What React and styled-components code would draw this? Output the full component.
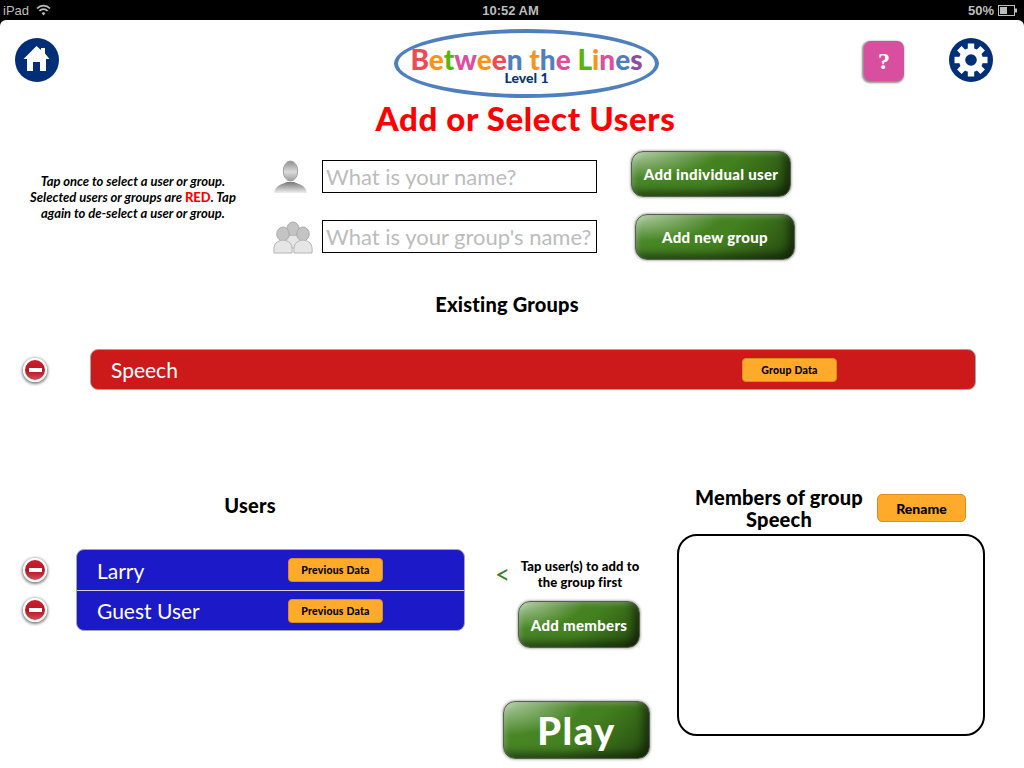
import React from 'react';
import styled, { createGlobalStyle } from 'styled-components';

const GlobalStyle = createGlobalStyle`
  html, body {
    margin: 0;
    background: #000;
    font-family: "Lato", "Liberation Sans", sans-serif;
  }
  * { box-sizing: border-box; }
`;

const Page = styled.div`
  width: 1024px;
  height: 768px;
  overflow: hidden;
  background: #000;
`;

const StatusBar = styled.div`
  height: 20px;
  padding: 0 6px 0 3px;
  display: grid;
  grid-template-columns: 1fr auto 1fr;
  align-items: center;
  color: #bdbdbd;
  font: 13px "Liberation Sans", sans-serif;
`;

const StatusLeft = styled.div`
  display: flex;
  align-items: center;
  gap: 7px;
`;

const StatusTime = styled.div`
  font-weight: 700;
`;

const StatusRight = styled.div`
  display: flex;
  justify-content: flex-end;
  align-items: center;
  gap: 4px;
  font-weight: 700;
`;

const Screen = styled.div`
  height: 748px;
  background: #fff;
  border-radius: 6px 6px 0 0;
  color: #000;
`;

const Header = styled.header`
  height: 80px;
  padding: 9px 0 0 15px;
  display: flex;
  align-items: flex-start;
`;

const RoundIcon = styled.div`
  width: 44px;
  height: 44px;
  margin: 9px 0 0 ${(p) => p.$left || 0}px;
  flex: none;
  svg { display: block; }
`;

const Logo = styled.div`
  width: 265px;
  height: 69px;
  margin-left: 335px;
  flex: none;
  border: 4px solid #4f7fbd;
  border-radius: 50%;
  display: flex;
  flex-direction: column;
  align-items: center;
  padding-top: 14px;
`;

const LogoTitle = styled.div`
  font-size: 28px;
  line-height: 24px;
  font-weight: 900;
  white-space: nowrap;
`;

const LogoLetter = styled.span`
  color: ${(p) => p.$color};
`;

const LogoLevel = styled.div`
  font-size: 14px;
  line-height: 14px;
  font-weight: 900;
  color: #0b3478;
`;

const HelpButton = styled.div`
  width: 40px;
  height: 40px;
  margin: 12px 0 0 205px;
  flex: none;
  border-radius: 7px;
  background: #d94f9f;
  box-shadow: -1px 1px 2px 1px rgba(0, 0, 0, 0.45);
  color: #fff;
  font: 700 24px/40px "Liberation Serif", serif;
  text-align: center;
`;

const Title = styled.h1`
  margin: 0;
  height: 36px;
  padding-left: 27px;
  color: #ff0000;
  font-size: 33px;
  line-height: 36px;
  font-weight: 900;
  letter-spacing: 0.6px;
  text-align: center;
`;

const FormSection = styled.section`
  padding-top: 15px;
  display: flex;
  align-items: flex-start;
`;

const Hint = styled.p`
  width: 216px;
  margin: 22px 0 0 25px;
  flex: none;
  font-size: 13px;
  line-height: 16px;
  font-weight: 700;
  font-style: italic;
  text-align: center;
`;

const RedWord = styled.span`
  color: #ff0000;
  font-style: normal;
  font-weight: 900;
`;

const Fields = styled.div`
  margin-left: 32px;
  display: flex;
  flex-direction: column;
  gap: 17px;
`;

const FieldRow = styled.div`
  display: flex;
  align-items: flex-start;
  height: 46px;
`;

const FieldIcon = styled.div`
  width: 49px;
  flex: none;
  margin-top: ${(p) => p.$top}px;
  svg { display: block; }
`;

const TextInput = styled.input`
  width: 275px;
  height: 33px;
  flex: none;
  margin-top: ${(p) => p.$top}px;
  padding: 0 3px;
  border: 1px solid #000;
  border-radius: 0;
  outline: none;
  font-family: "Lato", sans-serif;
  font-size: 22px;
  &::placeholder { color: #bcbcbc; opacity: 1; }
`;

const GreenButton = styled.button`
  width: ${(p) => p.$w}px;
  height: ${(p) => p.$h}px;
  margin: ${(p) => p.$margin || '0'};
  padding: 0;
  flex: none;
  border: 1px solid #55604f;
  border-radius: ${(p) => p.$radius || 12}px;
  background:
    radial-gradient(ellipse 55% 60% at 0% 0%, rgba(255, 255, 255, 0.55), rgba(255, 255, 255, 0) 100%),
    linear-gradient(135deg, #4b8a2a 0%, #43801f 55%, #24480f 100%);
  box-shadow:
    inset -5px -5px 9px rgba(0, 0, 0, 0.5),
    inset 2px 2px 5px rgba(255, 255, 255, 0.25),
    0 0 3px rgba(0, 0, 0, 0.55);
  color: #fff;
  font-family: "Lato", sans-serif;
  font-size: ${(p) => p.$size || 15}px;
  font-weight: 900;
  letter-spacing: ${(p) => p.$spacing || 0.3}px;
  white-space: nowrap;
`;

const SectionHeading = styled.h2`
  margin: ${(p) => p.$margin || 0};
  padding: ${(p) => p.$padding || 0};
  font-size: 20px;
  line-height: ${(p) => p.$line || 30}px;
  font-weight: 900;
  letter-spacing: 0.2px;
  text-align: center;
`;

const GroupRow = styled.div`
  margin-top: 30px;
  padding-left: 23px;
  display: flex;
  align-items: center;
`;

const MinusBadge = styled.div`
  width: 24px;
  height: 24px;
  flex: none;
  border-radius: 50%;
  border: 2px solid #fff;
  background: linear-gradient(#c8222e 0%, #bb1525 55%, #d3525c 100%);
  box-shadow: 0 1px 3px 1px rgba(0, 0, 0, 0.5);
  display: flex;
  align-items: center;
  justify-content: center;
  &::after {
    content: "";
    width: 13px;
    height: 4px;
    background: #fff;
  }
`;

const RedBar = styled.div`
  width: 886px;
  height: 41px;
  margin-left: 43px;
  padding-left: 20px;
  display: flex;
  align-items: center;
  border: 1px solid #a5a5a5;
  border-radius: 8px;
  background: #cc1a1a;
`;

const RowName = styled.div`
  width: ${(p) => p.$w}px;
  flex: none;
  color: #fff;
  font-size: 21px;
`;

const DataButton = styled.button`
  width: 95px;
  height: 24px;
  padding: 0;
  flex: none;
  border: 1px solid #d38f22;
  border-radius: 4px;
  background: #ffaa2b;
  color: #000;
  font-family: "Lato", sans-serif;
  font-size: 10.5px;
  font-weight: 900;
  letter-spacing: 0.2px;
`;

const BottomSection = styled.section`
  margin-top: 96px;
  display: flex;
  align-items: flex-start;
`;

const UsersColumn = styled.div`
  width: 480px;
  flex: none;
`;

const UsersBody = styled.div`
  margin-top: 29px;
  padding-left: 23px;
  display: flex;
  align-items: flex-start;
`;

const MinusColumn = styled.div`
  margin-top: 9px;
  display: flex;
  flex-direction: column;
  gap: 16px;
`;

const UserList = styled.div`
  width: 389px;
  margin-left: 29px;
  border: 1px solid #a5a5a5;
  border-radius: 8px;
  background: #1c19c8;
  overflow: hidden;
`;

const UserRow = styled.div`
  height: 40px;
  padding-left: 20px;
  display: flex;
  align-items: center;
  & + & { border-top: 1px solid #cfcfdc; }
`;

const MiddleColumn = styled.div`
  width: 180px;
  flex: none;
`;

const TipRow = styled.div`
  margin-top: 72px;
  display: flex;
  align-items: center;
`;

const TipArrow = styled.div`
  width: 38px;
  padding-left: 15px;
  flex: none;
  color: #3f7f2a;
  font-size: 26px;
  line-height: 32px;
`;

const TipText = styled.div`
  width: 124px;
  flex: none;
  font-size: 13px;
  line-height: 16px;
  font-weight: 900;
  text-align: center;
  letter-spacing: 0.1px;
`;

const MembersColumn = styled.div`
  flex: none;
  width: 344px;
`;

const MembersHeader = styled.div`
  display: flex;
  align-items: flex-start;
  padding-left: 34px;
`;

const MembersTitle = styled.div`
  width: 170px;
  flex: none;
`;

const RenameButton = styled.button`
  width: 89px;
  height: 28px;
  margin: 8px 0 0 13px;
  padding: 0;
  flex: none;
  border: 1px solid #d38f22;
  border-radius: 5px;
  background: #ffaa2b;
  color: #000;
  font-family: "Lato", sans-serif;
  font-size: 14px;
  font-weight: 900;
`;

const MembersBox = styled.div`
  width: 308px;
  height: 202px;
  margin: 4px 0 0 17px;
  border: 2px solid #000;
  border-radius: 20px;
`;

const LOGO_LETTERS = [
  ['B', '#ef4a52'], ['e', '#f7941e'], ['t', '#5ab40a'], ['w', '#de4e9c'], ['e', '#f7941e'], ['e', '#ef4a52'], ['n', '#4f7fbd'],
  [' ', '#000'],
  ['t', '#f7941e'], ['h', '#4f7fbd'], ['e', '#de4e9c'],
  [' ', '#000'],
  ['L', '#5ab40a'], ['i', '#f7941e'], ['n', '#de4e9c'], ['e', '#4f7fbd'], ['s', '#8a4fa3'],
];

const USERS = ['Larry', 'Guest User'];

function WifiIcon() {
  return (
    <svg width="15" height="12" viewBox="0 0 15 12" fill="none" stroke="#bdbdbd" strokeWidth="1.7">
      <path d="M1 4.5 A9 9 0 0 1 14 4.5" />
      <path d="M3.4 7 A5.6 5.6 0 0 1 11.6 7" />
      <path d="M7.5 11.5 L5.6 9.3 A2.6 2.6 0 0 1 9.4 9.3 Z" fill="#bdbdbd" stroke="none" />
    </svg>
  );
}

function BatteryIcon() {
  return (
    <svg width="20" height="11" viewBox="0 0 20 11">
      <rect x="0.5" y="0.5" width="16" height="10" fill="none" stroke="#bdbdbd" />
      <rect x="2" y="2" width="7" height="7" fill="#bdbdbd" />
      <rect x="17" y="3.5" width="2" height="4" fill="#bdbdbd" />
    </svg>
  );
}

function HomeIcon() {
  return (
    <svg width="44" height="44" viewBox="0 0 44 44">
      <circle cx="22" cy="22" r="22" fill="#002f78" />
      <path
        d="M21.5 8 L26 12 V10 H30 V15.5 L34.5 21 H31 V33 H25 V24 H18 V33 H12 V21 H8.5 Z"
        fill="#fff"
      />
    </svg>
  );
}

function GearIcon() {
  return (
    <svg width="44" height="44" viewBox="0 0 44 44">
      <circle cx="22" cy="22" r="22" fill="#002f78" />
      {[0, 45, 90, 135, 180, 225, 270, 315].map((a) => (
        <rect key={a} x="18.8" y="5.5" width="6.4" height="8" fill="#fff" transform={`rotate(${a} 22 22)`} />
      ))}
      <circle cx="22" cy="22" r="12" fill="#fff" />
      <circle cx="22" cy="22" r="5.8" fill="#002f78" />
    </svg>
  );
}

function PersonIcon() {
  return (
    <svg width="35" height="34" viewBox="0 0 35 34">
      <defs>
        <linearGradient id="personFill" x1="0" y1="0" x2="0" y2="1">
          <stop offset="0" stopColor="#8f8f8f" />
          <stop offset="0.55" stopColor="#dcdcdc" />
          <stop offset="1" stopColor="#9a9a9a" />
        </linearGradient>
        <linearGradient id="personBody" x1="0" y1="0" x2="0" y2="1">
          <stop offset="0" stopColor="#777" />
          <stop offset="1" stopColor="#efefef" />
        </linearGradient>
      </defs>
      <ellipse cx="17.5" cy="11" rx="7.2" ry="10" fill="url(#personFill)" stroke="#a0a0a0" />
      <path d="M1 33 C2 25 10 24 14 22 H21 C25 24 33 25 34 33 Z" fill="url(#personBody)" />
    </svg>
  );
}

function GroupIcon() {
  const figure = (cx, cy) => (
    <g key={cx}>
      <ellipse cx={cx} cy={cy} rx="6.2" ry="7" fill="#c4c4c4" stroke="#aaa" />
      <path
        d={`M${cx - 9} ${cy + 19} C${cx - 10} ${cy + 9} ${cx - 6} ${cy + 7} ${cx} ${cy + 6} C${cx + 6} ${cy + 7} ${cx + 10} ${cy + 9} ${cx + 9} ${cy + 19} Z`}
        fill="#e6e6e6"
        stroke="#b5b5b5"
      />
    </g>
  );
  return (
    <svg width="40" height="34" viewBox="0 0 40 34">
      {figure(20, 8)}
      {figure(10, 13)}
      {figure(30, 13)}
    </svg>
  );
}

export default function App() {
  return (
    <Page>
      <GlobalStyle />
      <StatusBar>
        <StatusLeft>iPad <WifiIcon /></StatusLeft>
        <StatusTime>10:52 AM</StatusTime>
        <StatusRight>50% <BatteryIcon /></StatusRight>
      </StatusBar>
      <Screen>
        <Header>
          <RoundIcon><HomeIcon /></RoundIcon>
          <Logo>
            <LogoTitle>
              {LOGO_LETTERS.map(([ch, color], i) => (
                <LogoLetter key={i} $color={color}>{ch}</LogoLetter>
              ))}
            </LogoTitle>
            <LogoLevel>Level 1</LogoLevel>
          </Logo>
          <HelpButton>?</HelpButton>
          <RoundIcon $left={45}><GearIcon /></RoundIcon>
        </Header>
        <Title>Add or Select Users</Title>

        <FormSection>
          <Hint>
            Tap once to select a user or group. Selected users or groups are <RedWord>RED</RedWord>. Tap again to de-select a user or group.
          </Hint>
          <Fields>
            <FieldRow>
              <FieldIcon $top={9}><PersonIcon /></FieldIcon>
              <TextInput $top={9} placeholder="What is your name?" />
              <GreenButton $w={160} $h={46} $margin="0 0 0 34px">Add individual user</GreenButton>
            </FieldRow>
            <FieldRow>
              <FieldIcon $top={7}><GroupIcon /></FieldIcon>
              <TextInput $top={6} placeholder="What is your group's name?" />
              <GreenButton $w={160} $h={46} $margin="0 0 0 38px">Add new group</GreenButton>
            </FieldRow>
          </Fields>
        </FormSection>

        <SectionHeading $margin="29px 0 0" $padding="0 10px 0 0">Existing Groups</SectionHeading>

        <GroupRow>
          <MinusBadge />
          <RedBar>
            <RowName $w={631}>Speech</RowName>
            <DataButton>Group Data</DataButton>
          </RedBar>
        </GroupRow>

        <BottomSection>
          <UsersColumn>
            <SectionHeading $padding="4px 0 0 20px">Users</SectionHeading>
            <UsersBody>
              <MinusColumn>
                {USERS.map((name) => <MinusBadge key={name} />)}
              </MinusColumn>
              <UserList>
                {USERS.map((name) => (
                  <UserRow key={name}>
                    <RowName $w={191}>{name}</RowName>
                    <DataButton>Previous Data</DataButton>
                  </UserRow>
                ))}
              </UserList>
            </UsersBody>
          </UsersColumn>

          <MiddleColumn>
            <TipRow>
              <TipArrow>&lt;</TipArrow>
              <TipText>Tap user(s) to add to the group first</TipText>
            </TipRow>
            <GreenButton $w={122} $h={47} $margin="11px 0 0 38px">Add members</GreenButton>
            <GreenButton $w={147} $h={58} $margin="53px 0 0 23px" $size={38} $spacing={1.5}>Play</GreenButton>
          </MiddleColumn>

          <MembersColumn>
            <MembersHeader>
              <MembersTitle>
                <SectionHeading $line={22}>Members of group Speech</SectionHeading>
              </MembersTitle>
              <RenameButton>Rename</RenameButton>
            </MembersHeader>
            <MembersBox />
          </MembersColumn>
        </BottomSection>
      </Screen>
    </Page>
  );
}
